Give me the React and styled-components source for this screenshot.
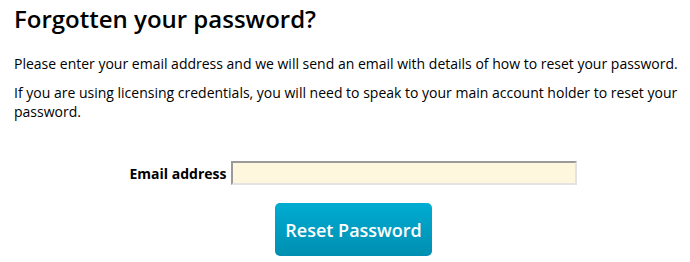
import React from 'react';
import styled, { createGlobalStyle } from 'styled-components';

const GlobalStyle = createGlobalStyle`
  html, body {
    margin: 0;
    padding: 0;
    background: #ffffff;
  }
  body {
    font-family: "Open Sans", "Liberation Sans", sans-serif;
    color: #000000;
  }
`;

const Page = styled.div`
  width: 690px;
  padding: 4px 0 0 14px;
  box-sizing: border-box;
`;

const Title = styled.h1`
  font-size: 24px;
  font-weight: 600;
  line-height: 30px;
  margin: 0 0 20px 0;
`;

const Text = styled.p`
  font-size: 14px;
  line-height: 19px;
  margin: 0 0 10px 0;
`;

const Form = styled.form`
  display: flex;
  flex-direction: column;
  align-items: center;
  margin-top: 40px;
  padding-left: 3px;
`;

const Row = styled.div`
  display: flex;
  align-items: center;
  gap: 5px;
`;

const Label = styled.label`
  font-size: 14px;
  line-height: 19px;
  font-weight: 700;
`;

const Input = styled.input`
  width: 346px;
  height: 24px;
  box-sizing: border-box;
  background: #fff7dd;
  border: 2px solid;
  border-color: #9a9a9a #e3e3e3 #e3e3e3 #9a9a9a;
  padding: 2px 4px;
  font-family: inherit;
  font-size: 13px;
  outline: none;
`;

const Button = styled.button`
  margin-top: 18px;
  width: 157px;
  height: 53px;
  border: none;
  border-radius: 5px;
  background: linear-gradient(180deg, #00acd2 0%, #008fb1 100%);
  color: #ffffff;
  font-family: "Open Sans", "Liberation Sans", sans-serif;
  font-size: 18px;
  font-weight: 600;
  cursor: pointer;
`;

export default function App() {
  return (
    <Page>
      <GlobalStyle />
      <Title>Forgotten your password?</Title>
      <Text>
        Please enter your email address and we will send an email with details of how to reset your password.
      </Text>
      <Text>
        If you are using licensing credentials, you will need to speak to your main account holder to reset your password.
      </Text>
      <Form onSubmit={(e) => e.preventDefault()}>
        <Row>
          <Label htmlFor="email">Email address</Label>
          <Input id="email" type="text" />
        </Row>
        <Button type="submit">Reset Password</Button>
      </Form>
    </Page>
  );
}
